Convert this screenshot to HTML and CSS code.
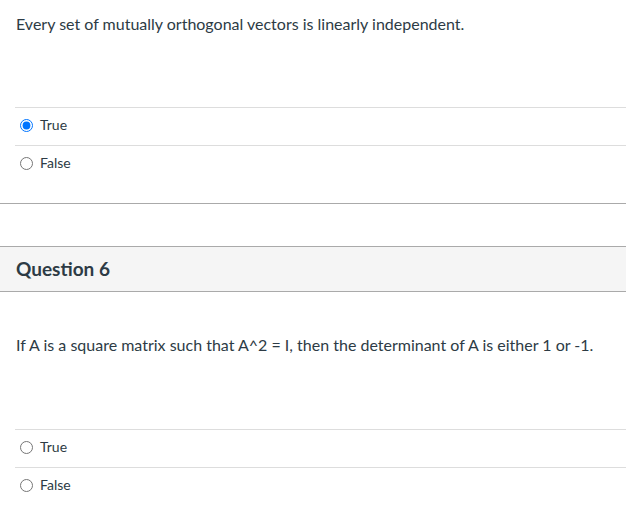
FILE: index.html
```html
<!DOCTYPE html>
<html lang="en">
<head>
  <meta charset="UTF-8" />
  <title>Quiz</title>
  <link rel="stylesheet" href="styles.css">
</head>
<body>
  <div class="question">
    <div class="question-text">Every set of mutually orthogonal vectors is linearly independent.</div>
    <div class="answers">
      <label class="answer"><input type="radio" name="q5" checked> True</label>
      <label class="answer"><input type="radio" name="q5"> False</label>
    </div>
  </div>

  <div class="question">
    <div class="question-header">Question 6</div>
    <div class="question-text">If A is a square matrix such that A^2 = I, then the determinant of A is either 1 or -1.</div>
    <div class="answers">
      <label class="answer"><input type="radio" name="q6"> True</label>
      <label class="answer"><input type="radio" name="q6"> False</label>
    </div>
  </div>
</body>
</html>
```

FILE: styles.css
```css
body {
  font-family: Lato, "Liberation Sans", sans-serif;
  margin: 0;
  color: #2d3b45;
  background: #fff;
}

.question {
  border-bottom: 1px solid #aaaaaa;
  padding-bottom: 20px;
}

.question + .question {
  margin-top: 42px;
  border-bottom: none;
}

.question-header {
  background-color: #f5f5f5;
  border-top: 1px solid #aaaaaa;
  border-bottom: 1px solid #aaaaaa;
  height: 44px;
  line-height: 44px;
  padding: 0 16px;
  font-size: 19px;
  font-weight: bold;
}

.question-text {
  font-size: 16px;
  line-height: 20px;
  padding: 14px 16px 73px;
}

.question-header + .question-text {
  padding-top: 43px;
  padding-bottom: 74px;
}

.answers {
  margin-left: 15px;
}

.answer {
  display: flex;
  align-items: center;
  height: 33px;
  padding-bottom: 4px;
  border-top: 1px solid #dddddd;
  font-size: 14px;
  padding-left: 2px;
}

.answer input {
  margin: 2px 7px 0 3px;
}
```
